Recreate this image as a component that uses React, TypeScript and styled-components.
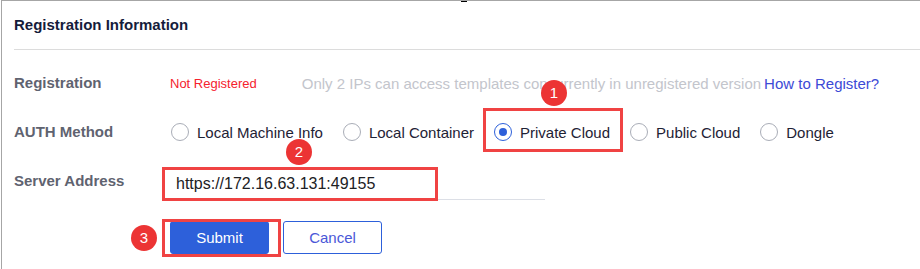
import React from "react";
import styled, { createGlobalStyle } from "styled-components";

const Global = createGlobalStyle`
  html, body { margin: 0; padding: 0; background: #fff; }
  body { font-family: "Liberation Sans", Arial, sans-serif; }
  * { box-sizing: border-box; }
`;

const Panel = styled.div`
  position: relative;
  margin-left: 1px;
  height: 269px;
  border-top: 1px solid #a6a6a6;
  border-left: 1px solid #a6a6a6;
  overflow: hidden;
  &::before {
    content: "";
    position: absolute;
    left: 459px;
    top: -1px;
    width: 6px;
    height: 2px;
    background: #000;
  }
`;

const Header = styled.div`
  height: 48px;
  padding-left: 12px;
  line-height: 47px;
  font-size: 15px;
  font-weight: 700;
  color: #151c3b;
`;

const Divider = styled.div`
  margin-left: 12px;
  height: 1px;
  background: #dcdcdc;
`;

const Form = styled.div`
  padding: 16px 0 0 12px;
  display: flex;
  flex-direction: column;
`;

const Row = styled.div<{ $top?: number }>`
  display: flex;
  align-items: flex-start;
  margin-top: ${(p) => p.$top ?? 0}px;
`;

const Label = styled.div`
  width: 156px;
  flex: none;
  height: 34px;
  line-height: 34px;
  font-size: 15px;
  font-weight: 700;
  color: #5f6370;
  white-space: nowrap;
`;

const Value = styled.div`
  display: flex;
  align-items: center;
  height: 34px;
  white-space: nowrap;
`;

const Status = styled.span`
  font-size: 13px;
  color: #f5222d;
  margin-right: 45px;
`;

const Hint = styled.span`
  font-size: 15px;
  color: #c3c5cc;
  margin-right: 3px;
`;

const Link = styled.a`
  font-size: 15px;
  color: #3c4ad6;
  text-decoration: none;
`;

const RadioGroup = styled.div`
  display: flex;
  align-items: center;
  height: 34px;
  padding-left: 1px;
  gap: 20px;
`;

const RadioItem = styled.label`
  position: relative;
  display: flex;
  align-items: center;
  gap: 8px;
  height: 20px;
  font-size: 15px;
  color: #1e2235;
  white-space: nowrap;
`;

const Circle = styled.span<{ $checked?: boolean }>`
  width: 18px;
  height: 18px;
  border-radius: 50%;
  border: 1px solid ${(p) => (p.$checked ? "#2d60da" : "#a9adb7")};
  display: flex;
  align-items: center;
  justify-content: center;
  flex: none;
  &::after {
    content: "";
    display: ${(p) => (p.$checked ? "block" : "none")};
    width: 8px;
    height: 8px;
    border-radius: 50%;
    background: #2d60da;
  }
`;

const Highlight = styled.span<{ $t: number; $r: number; $b: number; $l: number }>`
  position: absolute;
  top: ${(p) => p.$t}px;
  right: ${(p) => p.$r}px;
  bottom: ${(p) => p.$b}px;
  left: ${(p) => p.$l}px;
  border: 3px solid #f04343;
  pointer-events: none;
`;

const Badge = styled.span<{ $x: number; $y: number }>`
  position: absolute;
  left: ${(p) => p.$x}px;
  top: ${(p) => p.$y}px;
  width: 26px;
  height: 26px;
  border-radius: 50%;
  background: #ec3434;
  color: #fff;
  font-size: 15px;
  line-height: 26px;
  text-align: center;
  z-index: 2;
`;

const Field = styled.div`
  position: relative;
  margin-left: -8px;
  margin-top: 3px;
  width: 383px;
  height: 33px;
  border-bottom: 1px solid #dcdfe6;
  padding-left: 14px;
  line-height: 33px;
  font-size: 16px;
  color: #202124;
`;

const FieldBox = styled.span`
  position: absolute;
  left: 0;
  top: 0;
  width: 276px;
  height: 34px;
  border: 3px solid #f04343;
`;

const Buttons = styled.div`
  display: flex;
  margin-top: 21px;
  padding-left: 156px;
  gap: 14px;
`;

const ButtonWrap = styled.div`
  position: relative;
`;

const Button = styled.button<{ $primary?: boolean }>`
  width: 99px;
  height: 33px;
  border-radius: 3px;
  border: 1px solid #2d60da;
  background: ${(p) => (p.$primary ? "#2d60da" : "#fff")};
  color: ${(p) => (p.$primary ? "#fff" : "#4a57d8")};
  font-family: "Liberation Sans", Arial, sans-serif;
  font-size: 15px;
  padding: 0;
`;

const methods = ["Local Machine Info", "Local Container", "Private Cloud", "Public Cloud", "Dongle"];

export default function App() {
  return (
    <>
      <Global />
      <Panel>
        <Header>Registration Information</Header>
        <Divider />
        <Form>
          <Row>
            <Label>Registration</Label>
            <Value>
              <Status>Not Registered</Status>
              <Hint>Only 2 IPs can access templates concurrently in unregistered version</Hint>
              <Link>How to Register?</Link>
            </Value>
          </Row>
          <Row $top={15}>
            <Label>AUTH Method</Label>
            <RadioGroup>
              {methods.map((m) => {
                const checked = m === "Private Cloud";
                return (
                  <RadioItem key={m}>
                    <Circle $checked={checked} />
                    {m}
                    {checked && (
                      <>
                        <Highlight $t={-14} $r={-13} $b={-10} $l={-11} />
                        <Badge $x={47} $y={-42}>1</Badge>
                      </>
                    )}
                  </RadioItem>
                );
              })}
            </RadioGroup>
          </Row>
          <Row $top={15}>
            <Label>Server Address</Label>
            <Field>
              https://172.16.63.131:49155
              <FieldBox />
              <Badge $x={124} $y={-28}>2</Badge>
            </Field>
          </Row>
          <Buttons>
            <ButtonWrap>
              <Button $primary>Submit</Button>
              <Highlight $t={-2} $r={-12} $b={-3} $l={-8} />
              <Badge $x={-39} $y={4}>3</Badge>
            </ButtonWrap>
            <ButtonWrap>
              <Button>Cancel</Button>
            </ButtonWrap>
          </Buttons>
        </Form>
      </Panel>
    </>
  );
}
